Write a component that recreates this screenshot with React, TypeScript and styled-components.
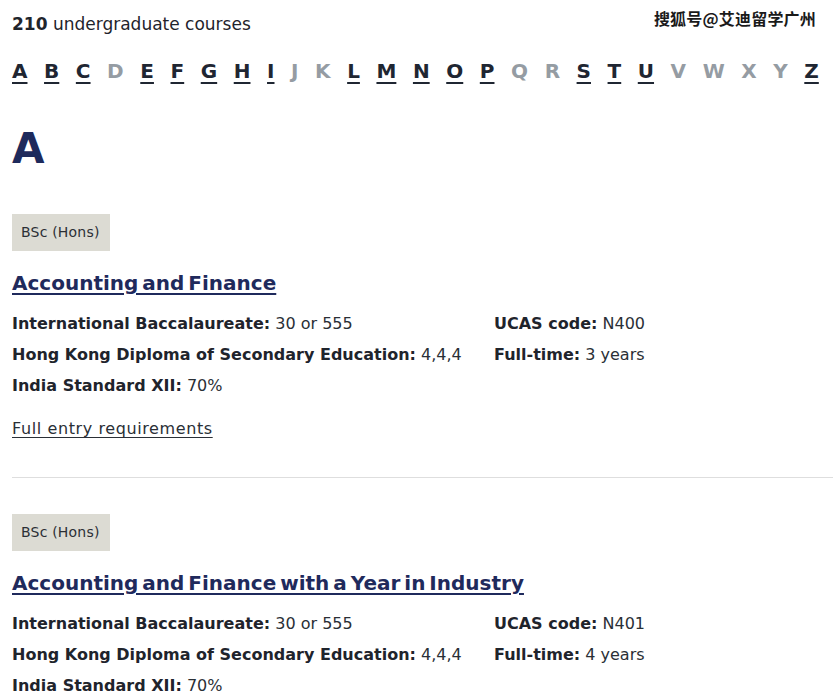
import React from "react";
import styled, { createGlobalStyle } from "styled-components";

const GlobalStyle = createGlobalStyle`
  html, body { margin: 0; padding: 0; background: #ffffff; }
  body { font-family: "DejaVu Sans", "Noto Sans", Arial, sans-serif; color: #1f242c; }
`;

const Page = styled.div`
  position: relative;
  padding: 10px 0 0 12px;
  overflow: hidden;
  height: 696px;
  box-sizing: border-box;
`;

const Watermark = styled.div`
  position: absolute;
  top: 6px;
  right: 17px;
  font-family: "Noto Sans CJK SC", sans-serif;
  font-size: 16px;
  font-weight: 600;
  color: #1a1a1a;
  letter-spacing: 0.2px;
  text-shadow: 1px 1px 0 #ffffff, -1px -1px 0 #ffffff, 1px -1px 0 #fff, -1px 1px 0 #fff;
`;

const Count = styled.p`
  margin: 0;
  font-size: 17px;
  line-height: 28px;
  color: #1f242c;
  b { font-weight: 700; }
`;

const LetterNav = styled.nav`
  display: flex;
  justify-content: space-between;
  margin-top: 18px;
  padding-right: 14px;
  height: 30px;
  align-items: center;
`;

const Letter = styled.a<{ $active: boolean }>`
  font-size: 20px;
  font-weight: 600;
  color: ${(p) => (p.$active ? "#1f2632" : "#959ca3")};
  text-decoration: ${(p) => (p.$active ? "underline" : "none")};
  text-underline-offset: 4px;
  text-decoration-thickness: 2px;
`;

const SectionHeading = styled.h2`
  margin: 35px 0 0;
  font-size: 42px;
  line-height: 56px;
  font-weight: 800;
  color: #1e2a5c;
`;

const Course = styled.article<{ $first?: boolean }>`
  padding: ${(p) => (p.$first ? "37px 0 36px" : "36px 0 36px")};
  border-bottom: 1px solid #dedede;
  &:last-child { border-bottom: none; }
`;

const Badge = styled.span`
  display: inline-block;
  background: #dcdbd3;
  color: #2b2f35;
  font-size: 14px;
  line-height: 37px;
  padding: 0 10px 0 9px;
  letter-spacing: 0.2px;
`;

const Title = styled.a`
  display: block;
  margin-top: 14px;
  font-size: 20px;
  line-height: 36px;
  font-weight: 700;
  color: #1f2a5c;
  word-spacing: -3px;
  text-decoration: underline;
  text-underline-offset: 3px;
  text-decoration-thickness: 1.5px;
`;

const Details = styled.div`
  display: grid;
  grid-template-columns: 482px 1fr;
  margin-top: 7px;
`;

const Col = styled.div`
  display: flex;
  flex-direction: column;
`;

const Row = styled.div`
  font-size: 16px;
  line-height: 31px;
  color: #2a2f36;
  white-space: nowrap;
  b { font-weight: 700; color: #1f242c; }
`;

const MoreLink = styled.a`
  display: inline-block;
  margin-top: 16px;
  font-size: 16px;
  line-height: 24px;
  color: #2a2f36;
  letter-spacing: 0.6px;
  text-decoration: underline;
  text-underline-offset: 3px;
  text-decoration-thickness: 1px;
`;

const letters = "ABCDEFGHIJKLMNOPQRSTUVWXYZ".split("");
const inactive = new Set(["D", "J", "K", "Q", "R", "V", "W", "X", "Y"]);

type CourseData = {
  title: string;
  ucas: string;
  years: string;
};

const courses: CourseData[] = [
  { title: "Accounting and Finance", ucas: "N400", years: "3 years" },
  { title: "Accounting and Finance with a Year in Industry", ucas: "N401", years: "4 years" },
];

export default function App() {
  return (
    <>
      <GlobalStyle />
      <Page>
        <Watermark>搜狐号@艾迪留学广州</Watermark>
        <Count>
          <b>210</b> undergraduate courses
        </Count>
        <LetterNav>
          {letters.map((l) => (
            <Letter key={l} $active={!inactive.has(l)}>
              {l}
            </Letter>
          ))}
        </LetterNav>
        <SectionHeading>A</SectionHeading>
        {courses.map((c, i) => (
          <Course key={c.title} $first={i === 0}>
            <Badge>BSc (Hons)</Badge>
            <Title>{c.title}</Title>
            <Details>
              <Col>
                <Row>
                  <b>International Baccalaureate:</b> 30 or 555
                </Row>
                <Row>
                  <b>Hong Kong Diploma of Secondary Education:</b> 4,4,4
                </Row>
                <Row>
                  <b>India Standard XII:</b> 70%
                </Row>
              </Col>
              <Col>
                <Row>
                  <b>UCAS code:</b> {c.ucas}
                </Row>
                <Row>
                  <b>Full-time:</b> {c.years}
                </Row>
              </Col>
            </Details>
            <MoreLink>Full entry requirements</MoreLink>
          </Course>
        ))}
      </Page>
    </>
  );
}
